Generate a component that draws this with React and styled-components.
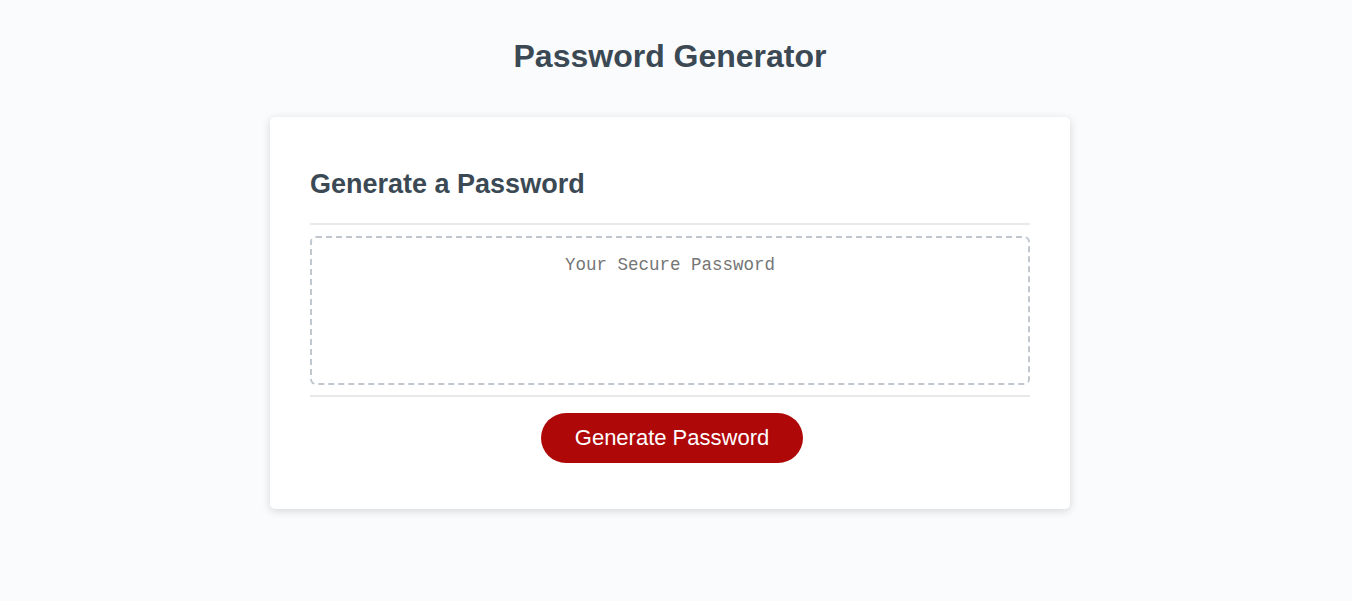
import React from 'react';
import styled, { createGlobalStyle } from 'styled-components';

const GlobalStyle = createGlobalStyle`
  *, *::before, *::after {
    box-sizing: border-box;
  }

  html, body {
    margin: 0;
    padding: 0;
    height: 100%;
  }

  body {
    font-family: 'Liberation Sans', Arial, sans-serif;
    background-color: #f9fbfd;
  }
`;

const Wrapper = styled.div`
  padding: 38px 32px 0 20px;
`;

const Header = styled.header`
  text-align: center;
  padding: 0 20px 42px;
  color: hsl(206, 17%, 28%);
`;

const Title = styled.h1`
  margin: 0;
  font-size: 32px;
  line-height: 37px;
  font-weight: 700;
`;

const Card = styled.div`
  background-color: #fff;
  border-radius: 5px;
  box-shadow: rgba(0, 0, 0, 0.15) 0px 2px 8px 0px;
  color: hsl(206, 17%, 28%);
  font-size: 18px;
  margin: 0 auto;
  max-width: 800px;
  padding: 30px 40px;
`;

const Divider = styled.div`
  width: 100%;
  height: 2px;
  background: #e7e9eb;
`;

const CardHeader = styled.div`
  h2 {
    margin: 22px 0 23px;
    font-size: 27px;
    line-height: 31px;
    font-weight: 700;
  }
`;

const CardBody = styled.div`
  padding: 11px 0 10px;
`;

const PasswordBox = styled.textarea`
  appearance: none;
  display: block;
  width: 100%;
  height: 149px;
  padding: 16px 15px 0;
  font-family: 'Liberation Mono', 'DejaVu Sans Mono', monospace;
  font-size: 17.5px;
  line-height: 22px;
  text-align: center;
  border: 2px dashed #c0c7cf;
  border-radius: 6px;
  resize: none;
  overflow: hidden;
  outline: none;
  color: #333;

  &::placeholder {
    color: #757575;
  }
`;

const CardFooter = styled.div`
  text-align: center;
`;

const Button = styled.button`
  border: none;
  background-color: hsl(360, 91%, 36%);
  border-radius: 25px;
  color: #fff;
  display: inline-block;
  font-family: 'Liberation Sans', Arial, sans-serif;
  font-size: 22px;
  line-height: 22px;
  margin: 16px 16px 16px 20px;
  padding: 14px 34px;
  text-align: center;
  cursor: pointer;
`;

const App = () => {
  return (
    <>
      <GlobalStyle />
      <Wrapper>
        <Header>
          <Title>Password Generator</Title>
        </Header>
        <Card>
          <CardHeader>
            <h2>Generate a Password</h2>
            <Divider />
          </CardHeader>
          <CardBody>
            <PasswordBox readOnly placeholder='Your Secure Password' aria-label='Generated Password' />
          </CardBody>
          <CardFooter>
            <Divider />
            <Button>Generate Password</Button>
          </CardFooter>
        </Card>
      </Wrapper>
    </>
  );
};

export default App;
